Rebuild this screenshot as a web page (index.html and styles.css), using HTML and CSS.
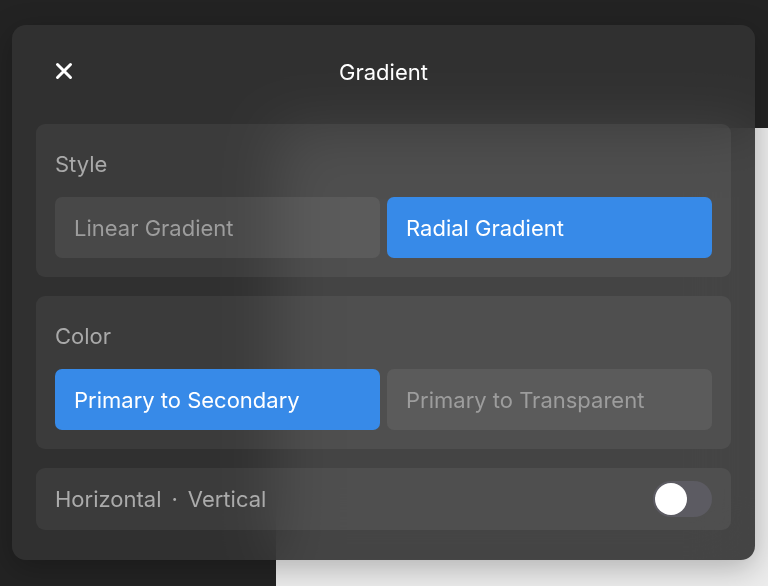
FILE: index.html
```html
<!DOCTYPE html>
<html>
<head>
<meta charset="utf-8">
<link rel="stylesheet" href="styles.css">
</head>
<body>
<div class="backdrop-window"></div>
<div class="panel">
  <div class="header">
    <button class="close" aria-label="Close">
      <svg width="18" height="18" viewBox="0 0 18 18"><path d="M2.5 2.5 L15.5 15.5 M15.5 2.5 L2.5 15.5" stroke="#fff" stroke-width="3" stroke-linecap="round"/></svg>
    </button>
    <div class="title">Gradient</div>
  </div>
  <div class="section">
    <div class="label">Style</div>
    <div class="options">
      <div class="option">Linear Gradient</div>
      <div class="option active">Radial Gradient</div>
    </div>
  </div>
  <div class="section">
    <div class="label">Color</div>
    <div class="options">
      <div class="option active">Primary to Secondary</div>
      <div class="option">Primary to Transparent</div>
    </div>
  </div>
  <div class="section row">
    <div class="row-label">Horizontal<span class="sep">·</span>Vertical</div>
    <div class="toggle"><div class="knob"></div></div>
  </div>
</div>
</body>
</html>
```
FILE: styles.css
```css
html, body {
  margin: 0;
  padding: 0;
}
body {
  width: 768px;
  height: 586px;
  background: #232323;
  font-family: "Inter", "Roboto", sans-serif;
  overflow: hidden;
  position: relative;
}
.backdrop-window {
  position: absolute;
  left: 276px;
  top: 128px;
  width: 492px;
  height: 458px;
  background: #ececec;
}
.panel {
  position: absolute;
  left: 12px;
  top: 25px;
  width: 743px;
  height: 535px;
  border-radius: 14px;
  background: rgba(50, 50, 50, 0.9);
  backdrop-filter: blur(30px);
  -webkit-backdrop-filter: blur(30px);
  box-shadow: 0 8px 30px rgba(0, 0, 0, 0.25);
  box-sizing: border-box;
  padding: 0 24px;
  display: flex;
  flex-direction: column;
  gap: 19px;
}
.header {
  height: 80px;
  display: flex;
  align-items: center;
  justify-content: center;
  position: relative;
}
.close {
  position: absolute;
  left: 19px;
  top: 37px;
  width: 18px;
  height: 18px;
  padding: 0;
  border: 0;
  background: none;
  display: flex;
}
.title {
  color: #fff;
  font-size: 22px;
  padding-top: 14px;
}
.section {
  background: rgba(255, 255, 255, 0.055);
  border-radius: 9px;
  padding: 27px 19px 19px;
}
.label {
  color: #a9a9a9;
  font-size: 22px;
  line-height: 26px;
  height: 26px;
  margin-bottom: 20px;
}
.options {
  display: flex;
  gap: 7px;
}
.option {
  flex: 1;
  height: 61px;
  border-radius: 7px;
  background: rgba(255, 255, 255, 0.065);
  color: #9d9d9d;
  font-size: 22px;
  display: flex;
  align-items: center;
  padding-left: 19px;
}
.option.active {
  background: #378ae8;
  color: #fff;
}
.section.row {
  padding: 0 19px;
  height: 62px;
  display: flex;
  align-items: center;
  justify-content: space-between;
}
.row-label {
  color: #ababab;
  font-size: 22px;
}
.sep {
  margin: 0 10px;
}
.toggle {
  width: 59px;
  height: 36px;
  border-radius: 18px;
  background: #5c5b62;
  position: relative;
}
.knob {
  position: absolute;
  left: 2px;
  top: 2px;
  width: 32px;
  height: 32px;
  border-radius: 50%;
  background: #fff;
}
```
